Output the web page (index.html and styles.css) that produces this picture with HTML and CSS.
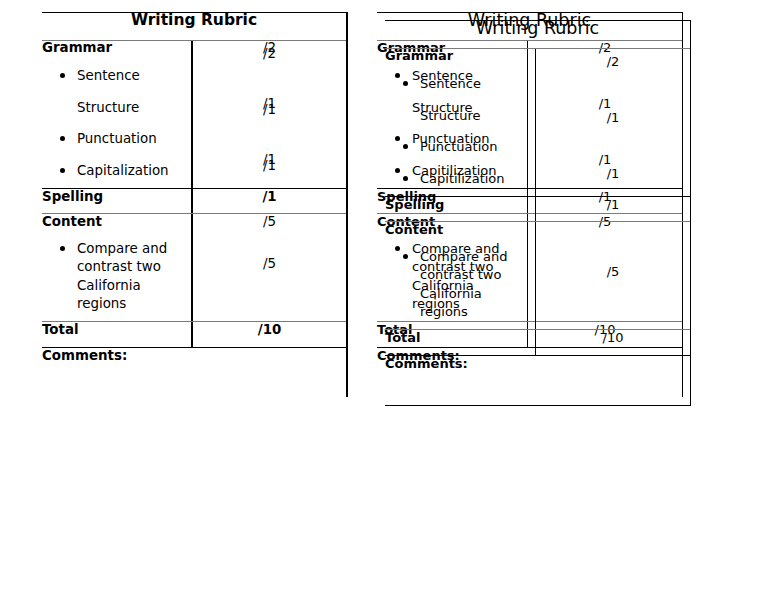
FILE: index.html
```html
<!DOCTYPE html>
<html lang="en">
<head>
<meta charset="utf-8">
<title>Writing Rubric</title>
<link rel="stylesheet" href="styles.css">
</head>
<body>
<div class="sheet">
  <section class="rubric rubric--main">
    <div class="r-title"><span class="r-title-text">Writing Rubric</span></div>
    <div class="r-row r-row--grammar">
      <div class="r-label">
        <div class="r-head">Grammar</div>
        <ul class="r-list r-list--tall">
          <li>Sentence<br>Structure</li>
          <li>Punctuation</li>
          <li>Capitalization</li>
        </ul>
      </div>
      <div class="r-score">
        <div class="val">/2<span class="val-dup">/2</span></div>
        <div class="val val--gap40">/1<span class="val-dup">/1</span></div>
        <div class="val val--gap40">/1<span class="val-dup">/1</span></div>
      </div>
    </div>
    <div class="r-row r-row--spelling">
      <div class="r-label"><div class="r-head">Spelling</div></div>
      <div class="r-score"><div class="val val--bold">/1</div></div>
    </div>
    <div class="r-row r-row--content">
      <div class="r-label">
        <div class="r-head">Content</div>
        <ul class="r-list r-list--tight">
          <li>Compare and<br>contrast two<br>California<br>regions</li>
        </ul>
      </div>
      <div class="r-score">
        <div class="val">/5</div>
        <div class="val val--gap26">/5</div>
      </div>
    </div>
    <div class="r-row r-row--total">
      <div class="r-label"><div class="r-head">Total</div></div>
      <div class="r-score"><div class="val val--bold">/10</div></div>
    </div>
    <div class="r-comments"><div class="r-head">Comments:</div></div>
  </section>

  <div class="ghost">
    <section class="rubric rubric--ghost">
      <div class="r-title"><span class="r-title-text">Writing Rubric</span></div>
      <div class="r-row r-row--grammar">
        <div class="r-label">
          <div class="r-head">Grammar</div>
          <ul class="r-list r-list--tall">
            <li>Sentence<br>Structure</li>
            <li>Punctuation</li>
            <li>Capitilization</li>
          </ul>
        </div>
        <div class="r-score">
          <div class="val">/2</div>
          <div class="val val--gap40">/1</div>
          <div class="val val--gap40">/1</div>
        </div>
      </div>
      <div class="r-row r-row--spelling">
        <div class="r-label"><div class="r-head">Spelling</div></div>
        <div class="r-score"><div class="val">/1</div></div>
      </div>
      <div class="r-row r-row--content">
        <div class="r-label">
          <div class="r-head">Content</div>
          <ul class="r-list r-list--tight">
            <li>Compare and<br>contrast two<br>California<br>regions</li>
          </ul>
        </div>
        <div class="r-score"><div class="val">/5</div></div>
      </div>
      <div class="r-row r-row--total">
        <div class="r-label"><div class="r-head">Total</div></div>
        <div class="r-score"><div class="val">/10</div></div>
      </div>
      <div class="r-comments"><div class="r-head">Comments:</div></div>
    </section>

    <section class="rubric rubric--ghost rubric--shifted">
      <div class="r-title"><span class="r-title-text">Writing Rubric</span></div>
      <div class="r-row r-row--grammar">
        <div class="r-label">
          <div class="r-head">Grammar</div>
          <ul class="r-list r-list--tall">
            <li>Sentence<br>Structure</li>
            <li>Punctuation</li>
            <li>Capitilization</li>
          </ul>
        </div>
        <div class="r-score r-score--low">
          <div class="val">/2</div>
          <div class="val val--gap40">/1</div>
          <div class="val val--gap40">/1</div>
        </div>
      </div>
      <div class="r-row r-row--spelling">
        <div class="r-label"><div class="r-head">Spelling</div></div>
        <div class="r-score"><div class="val">/1</div></div>
      </div>
      <div class="r-row r-row--content">
        <div class="r-label">
          <div class="r-head">Content</div>
          <ul class="r-list r-list--tight">
            <li>Compare and<br>contrast two<br>California<br>regions</li>
          </ul>
        </div>
        <div class="r-score"><div class="val val--late">/5</div></div>
      </div>
      <div class="r-row r-row--total">
        <div class="r-label"><div class="r-head">Total</div></div>
        <div class="r-score"><div class="val">/10</div></div>
      </div>
      <div class="r-comments"><div class="r-head">Comments:</div></div>
    </section>
  </div>
</div>
</body>
</html>
```

FILE: styles.css
```css
* { box-sizing: border-box; }

html, body {
  margin: 0;
  padding: 0;
  background: #fff;
}

body {
  width: 768px;
  height: 594px;
  overflow: hidden;
  font-family: "DejaVu Sans", "Noto Sans", sans-serif;
  color: #000;
}

.sheet {
  display: flex;
  align-items: flex-start;
  gap: 29px;
  padding: 12px 0 0 42px;
}

/* ---------- table ---------- */
.rubric {
  width: 306px;
  border-top: 1px solid #000;
  border-right: 2px solid #000;
  font-size: 13.4px;
  line-height: 16px;
}

.r-title {
  height: 28px;
  border-bottom: 1px solid #7a7a7a;
  text-align: center;
  line-height: 15px;
}

.rubric--main .r-title {
  font-size: 15.5px;
  font-weight: bold;
}

.r-title-text { display: block; }

.r-row {
  display: grid;
  grid-template-columns: 151px 1fr;
}

.r-label {
  border-right: 2px solid #000;
}

.r-score {
  text-align: center;
}

.r-row--grammar {
  height: 148px;
  border-bottom: 1px solid #000;
}

.r-row--spelling {
  height: 25px;
  border-bottom: 1px solid #7a7a7a;
}

.r-row--content {
  height: 108px;
  border-bottom: 1px solid #7a7a7a;
}

.r-row--total {
  height: 26px;
  border-bottom: 1px solid #000;
}

.r-comments {
  height: 49px;
}

.r-head {
  font-weight: bold;
  margin-top: 0;
}

.r-row--grammar .r-head { margin-top: -1px; }

/* ---------- bullet lists ---------- */
.r-list {
  list-style: none;
  margin: 0;
  padding: 0 0 0 35px;
}

.r-list li::before {
  content: "";
  display: inline-block;
  width: 5px;
  height: 5px;
  border-radius: 50%;
  background: #000;
  margin-left: -17px;
  margin-right: 12px;
  vertical-align: 2px;
}

.r-list--tall {
  margin-top: 4px;
  line-height: 31.5px;
}

.r-list--tight {
  margin-top: 10px;
  line-height: 18.3px;
}

/* ---------- score values ---------- */
.val {
  position: relative;
  margin-top: 0;
}

.r-row--grammar .val:first-child { margin-top: -1px; }
.r-row--grammar .r-score--low .val:first-child { margin-top: 5px; }

.val--gap40 { margin-top: 40px; }
.r-row--grammar .val--gap40 { margin-top: 40px; }
.val--gap26 { margin-top: 26px; }
.val--late { margin-top: 42px; }
.val--bold { font-weight: bold; }

.val-dup {
  position: absolute;
  left: 0;
  right: 0;
  top: 6px;
}

/* ---------- ghost double table ---------- */
.ghost {
  position: relative;
}

.rubric--ghost {
  font-size: 13px;
  border-right-width: 1px;
}

.rubric--ghost .r-label {
  border-right-width: 1px;
}

.rubric--ghost .r-title {
  font-size: 17.5px;
  font-weight: normal;
}

.rubric--shifted {
  position: absolute;
  top: 8px;
  left: 8px;
}

.rubric--shifted .r-comments {
  height: 50px;
  border-bottom: 1px solid #000;
}
```
